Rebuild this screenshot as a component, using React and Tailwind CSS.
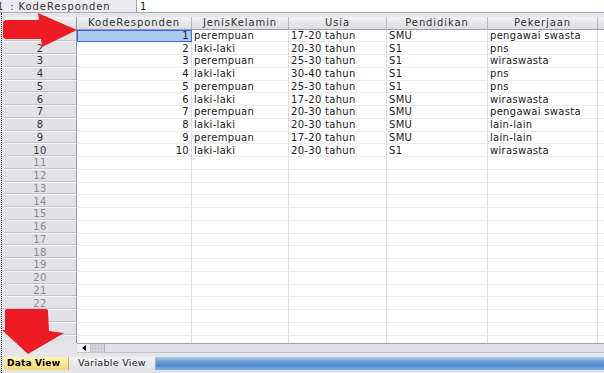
import React from 'react';

const data = [
  ['1', 'perempuan', '17-20 tahun', 'SMU', 'pengawai swasta'],
  ['2', 'laki-laki', '20-30 tahun', 'S1', 'pns'],
  ['3', 'perempuan', '25-30 tahun', 'S1', 'wiraswasta'],
  ['4', 'laki-laki', '30-40 tahun', 'S1', 'pns'],
  ['5', 'perempuan', '25-30 tahun', 'S1', 'pns'],
  ['6', 'laki-laki', '17-20 tahun', 'SMU', 'wiraswasta'],
  ['7', 'perempuan', '20-30 tahun', 'SMU', 'pengawai swasta'],
  ['8', 'laki-laki', '20-30 tahun', 'SMU', 'lain-lain'],
  ['9', 'perempuan', '17-20 tahun', 'SMU', 'lain-lain'],
  ['10', 'laki-laki', '20-30 tahun', 'S1', 'wiraswasta'],
];

const columns = [
  { label: 'KodeResponden', width: 'w-[115px]' },
  { label: 'JenisKelamin', width: 'w-[97px]' },
  { label: 'Usia', width: 'w-[98px]' },
  { label: 'Pendidikan', width: 'w-[101px]' },
  { label: 'Pekerjaan', width: 'w-[110px]' },
];

// row 25 sits half hidden under the scrollbar, so it gets no label
const RowHeader = ({ n }) => (
  <div
    className={`w-[73px] shrink-0 flex items-center justify-center bg-[#e2e2e6] border-r border-r-[#8c94a4] border-b border-b-[#f6f6f8] shadow-[inset_0_-1px_0_#c4c6ce] ${
      n <= 10 ? 'text-[#333]' : 'text-[#8a8a8a]'
    }`}
  >
    {n < 25 ? n : ''}
  </div>
);

const DataRow = ({ n }) => {
  const row = data[n - 1];
  return (
    <div className="flex h-[12.75px] shrink-0">
      <RowHeader n={n} />
      {columns.map((col, i) => {
        const selected = n === 1 && i === 0;
        return (
          <div
            key={col.label}
            className={`${col.width} shrink-0 flex items-center overflow-hidden whitespace-nowrap ${
              i === 0 ? 'justify-end pr-[2px]' : 'pl-[2px]'
            } ${
              selected
                ? 'bg-[#a8cbf0] border border-[#3a5ee8]'
                : 'bg-white border-r border-r-[#dcdce2] border-b border-b-[#ececf0]'
            }`}
          >
            {row ? row[i] : ''}
          </div>
        );
      })}
      <div className="flex-1 bg-white border-b border-b-[#ececf0]" />
    </div>
  );
};

export default function App() {
  const rowNumbers = Array.from({ length: 25 }, (_, i) => i + 1);

  return (
    <div className="relative w-[604px] h-[373px] overflow-hidden bg-[#e6e6ea] font-['DejaVu_Sans',sans-serif] text-[10px] text-[#1a1a1a] tracking-[0.3px] flex flex-col">
      {/* cell editor bar */}
      <div className="h-[13px] shrink-0 flex border-b border-[#a8acb6]">
        <div className="w-[137px] shrink-0 flex items-center bg-[#ececf0] border-r border-[#a8acb6] text-[#333] tracking-[0.9px] overflow-hidden whitespace-nowrap">
          <span className="-ml-[3px]">1</span>
          <span className="ml-[6px]">: KodeResponden</span>
        </div>
        <div className="flex-1 flex items-center bg-white pl-[3px]">1</div>
      </div>

      <div className="flex-1 min-h-0 flex flex-col ml-[1px] border-l border-dotted border-black pl-[2px] pt-[4px]">
        {/* column headers */}
        <div className="flex h-[12.5px] shrink-0 text-[#333] tracking-[0.9px]">
          <div className="w-[73px] shrink-0 bg-[linear-gradient(#f2f2f4,#dcdce2)] border-r border-r-[#8c94a4] border-b border-b-[#9ca0ac]" />
          {columns.map((col) => (
            <div
              key={col.label}
              className={`${col.width} shrink-0 flex items-center justify-center bg-[linear-gradient(#f2f2f4,#dcdce2)] border-r border-r-[#b4b8c4] border-b border-b-[#9ca0ac]`}
            >
              {col.label}
            </div>
          ))}
          <div className="flex-1 bg-[linear-gradient(#f2f2f4,#dcdce2)] border-b border-b-[#9ca0ac]" />
        </div>

        {/* rows */}
        <div className="flex-1 min-h-0 overflow-hidden flex flex-col">
          {rowNumbers.map((n) => (
            <DataRow key={n} n={n} />
          ))}
        </div>

        {/* horizontal scrollbar */}
        <div className="h-[10px] shrink-0 flex">
          <div className="w-[73px] shrink-0" />
          <div className="flex-1 flex bg-[#e0e0e6] border-t border-t-[#9aa0ac] border-b border-b-[#c0c2ca]">
            <div className="w-[14px] shrink-0 flex items-center justify-center bg-[#f0f0f2] border-r border-[#b8bcc6]">
              <div className="w-0 h-0 border-y-[3px] border-y-transparent border-r-[4px] border-r-black" />
            </div>
            <div className="w-[14px] shrink-0 bg-[#cfd6dc] bg-[radial-gradient(#b0bac4_1px,transparent_1px)] bg-[length:3px_3px] border-r border-[#a8b0ba]" />
          </div>
        </div>

        <div className="h-[4px] shrink-0" />

        {/* view tabs */}
        <div className="h-[13px] shrink-0 flex">
          <div className="w-[65px] shrink-0 flex items-center pl-[3px] bg-[linear-gradient(#fff4b8,#f8dc74)] border-r border-[#b8b070] font-bold text-[9px] tracking-[0.2px] text-black">
            Data View
          </div>
          <div className="w-[87px] shrink-0 flex items-center pl-[9px] bg-[linear-gradient(#f2f2f4,#e2e2e6)] border-r border-[#a8acb6] text-[9.5px] text-[#222]">
            Variable View
          </div>
          <div className="flex-1 bg-[linear-gradient(#b4cce6,#6a9ed6_35%,#4a88cc_65%,#86b0e0)]" />
        </div>
        <div className="h-[3px] shrink-0 bg-[#e4e4e8]" />
      </div>

      {/* red arrows drawn over the sheet */}
      <svg className="absolute left-0 top-0 pointer-events-none" width="604" height="373" viewBox="0 0 604 373">
        <path
          d="M3 23 Q3 20 6 20 L39 20 L38 13 L77 30 L42 47 L41 39 L6 39 Q3 39 3 36 Z"
          fill="#ed1c24"
        />
        <path
          d="M5 311 Q5 309 7 309 L46 309 Q48 309 48 311 L49 331 L64 333 L28 354 L2 330 L5 330 Z"
          fill="#ed1c24"
        />
      </svg>
    </div>
  );
}
